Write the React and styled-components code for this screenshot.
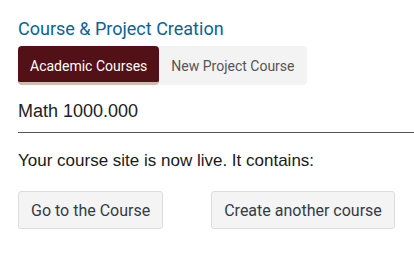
import React from "react";
import styled, { createGlobalStyle } from "styled-components";

const Global = createGlobalStyle`
  html, body { margin: 0; padding: 0; background: #fff; }
  body { font-family: Roboto, "Liberation Sans", sans-serif; }
`;

const Page = styled.div`
  padding: 18px 0 0 18px;
  width: 414px;
  box-sizing: border-box;
`;

const Title = styled.h2`
  margin: 0;
  font-family: Roboto, sans-serif;
  font-weight: 400;
  font-size: 18px;
  line-height: 22px;
  color: #0b6398;
`;

const TabList = styled.div`
  display: inline-flex;
  margin-top: 6px;
  background: #f3f3f3;
  border-radius: 4px;
`;

const Tab = styled.button`
  font-family: Roboto, sans-serif;
  font-size: 14px;
  height: 39px;
  padding: 0 12px;
  border: none;
  border-radius: 4px;
  cursor: pointer;
  background: ${(p) => (p.$active ? "#521116" : "transparent")};
  color: ${(p) => (p.$active ? "#fff" : "#555")};
  border-bottom: 3px solid ${(p) => (p.$active ? "#cdbfad" : "transparent")};
  padding-top: 3px;
  box-sizing: border-box;
`;

const CourseName = styled.div`
  font-family: "Liberation Sans", Arial, sans-serif;
  font-size: 18px;
  color: #222;
  margin-top: 16px;
  line-height: 20px;
  padding-bottom: 11px;
  border-bottom: 1.5px solid #555;
`;

const Message = styled.p`
  margin: 18px 0 0;
  font-family: "Liberation Sans", Arial, sans-serif;
  font-size: 17px;
  line-height: 19px;
  color: #1a1a1a;
`;

const Actions = styled.div`
  display: flex;
  gap: 48px;
  margin-top: 21px;
`;

const Button = styled.button`
  font-family: Roboto, sans-serif;
  font-size: 16px;
  color: #343b44;
  background: #f4f4f4;
  border: 1px solid #dcdcdc;
  border-radius: 3px;
  height: 38px;
  padding: 0 12px;
  cursor: pointer;
`;

export default function App() {
  return (
    <>
      <Global />
      <Page>
        <Title>Course &amp; Project Creation</Title>
        <TabList>
          <Tab $active>Academic Courses</Tab>
          <Tab>New Project Course</Tab>
        </TabList>
        <CourseName>Math 1000.000</CourseName>
        <Message>Your course site is now live. It contains:</Message>
        <Actions>
          <Button>Go to the Course</Button>
          <Button>Create another course</Button>
        </Actions>
      </Page>
    </>
  );
}
